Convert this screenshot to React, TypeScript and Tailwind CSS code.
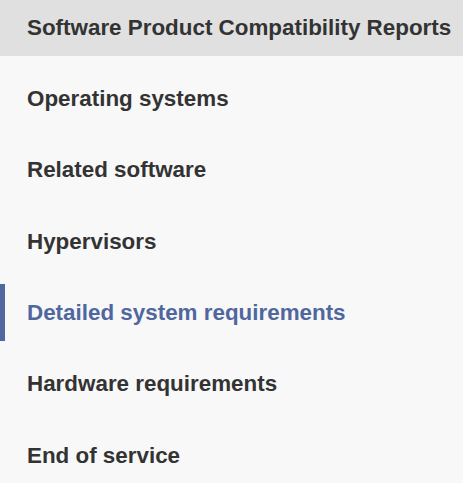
import React from 'react';

const items = [
  'Operating systems',
  'Related software',
  'Hypervisors',
  'Detailed system requirements',
  'Hardware requirements',
  'End of service',
];

export default function App() {
  const active = 'Detailed system requirements';
  return (
    <div className="w-[463px] h-[483px] overflow-hidden bg-[#f8f8f8] font-['Liberation_Sans',Arial,sans-serif]">
      <div className="h-[56px] flex items-center px-[27px] bg-[#e0e0e0] text-[22.4px] font-bold text-[#333333] whitespace-nowrap">
        Software Product Compatibility Reports
      </div>
      <nav className="flex flex-col gap-[14.3px] pt-[14.5px]">
        {items.map((label) => {
          const isActive = label === active;
          return (
            <div
              key={label}
              className={`h-[57px] flex items-center pl-[22px] pr-[27px] text-[22.4px] font-bold border-l-[5px] whitespace-nowrap ${
                isActive ? 'border-[#4f68a0] text-[#4f679e]' : 'border-transparent text-[#333333]'
              }`}
            >
              {label}
            </div>
          );
        })}
      </nav>
    </div>
  );
}
